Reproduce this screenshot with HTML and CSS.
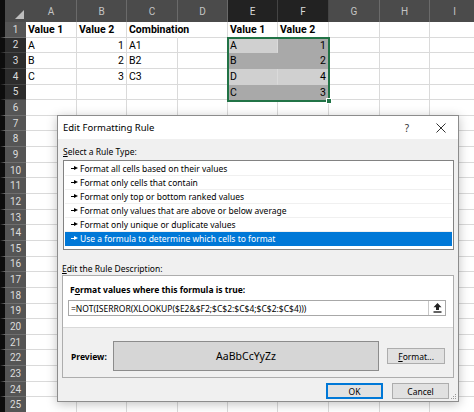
FILE: index.html
```html
<!DOCTYPE html>
<html lang="en">

<head>
  <meta charset="UTF-8">
  <title>Edit Formatting Rule</title>
  <link rel="stylesheet" href="styles.css">
</head>

<body>
  <div class="workbook">
    <div class="sheet" id="sheet"></div>
    <div class="selection"><span class="handle"></span></div>

    <div class="dialog">
      <div class="titlebar">
        <span class="title">Edit Formatting Rule</span>
        <span class="help">?</span>
        <svg class="close" width="10" height="10" viewBox="0 0 10 10">
          <path d="M0.5 0.5L9.5 9.5M9.5 0.5L0.5 9.5" stroke="#333" stroke-width="1" fill="none" />
        </svg>
      </div>
      <div class="body">
        <div class="label"><u>S</u>elect a Rule Type:</div>
        <ul class="rules">
          <li><i class="arrow"></i>Format all cells based on their values</li>
          <li><i class="arrow"></i>Format only cells that contain</li>
          <li><i class="arrow"></i>Format only top or bottom ranked values</li>
          <li><i class="arrow"></i>Format only values that are above or below average</li>
          <li><i class="arrow"></i>Format only unique or duplicate values</li>
          <li class="active"><i class="arrow"></i>Use a formula to determine which cells to format</li>
        </ul>

        <div class="label label-desc"><u>E</u>dit the Rule Description:</div>
        <div class="group">
          <div class="group-top">
            <div class="label-bold">F<u>o</u>rmat values where this formula is true:</div>
            <div class="formula">
              <span class="formula-text">=NOT(ISERROR(XLOOKUP($E2&amp;$F2;$C$2:$C$4;$C$2:$C$4)))</span>
              <span class="collapse">
                <svg width="9" height="10" viewBox="0 0 9 10">
                  <path d="M4.5 0L8.5 4.2H6V7H3V4.2H0.5Z" fill="#222" />
                  <rect x="0.5" y="8.3" width="8" height="1.4" fill="#222" />
                </svg>
              </span>
            </div>
          </div>
          <div class="group-bottom">
            <span class="preview-label">Preview:</span>
            <div class="preview">AaBbCcYyZz</div>
            <button class="btn btn-format"><u>F</u>ormat...</button>
          </div>
        </div>

        <div class="footer">
          <button class="btn btn-ok">OK</button>
          <button class="btn">Cancel</button>
        </div>
      </div>
      <svg class="grip" width="7" height="7" viewBox="0 0 7 7">
        <rect x="5" y="1" width="1" height="1" fill="#999" />
        <rect x="3" y="3" width="1" height="1" fill="#999" />
        <rect x="5" y="3" width="1" height="1" fill="#999" />
        <rect x="1" y="5" width="1" height="1" fill="#999" />
        <rect x="3" y="5" width="1" height="1" fill="#999" />
        <rect x="5" y="5" width="1" height="1" fill="#999" />
      </svg>
    </div>
  </div>

  <script>
    // sheet contents, rows 1-5; empty rows are filled in below
    var cols = ["A", "B", "C", "D", "E", "F", "G", "H", "I"];
    var data = [
      [["Value 1", "b"], ["Value 2", "b"], ["Combination", "b spill"], "", ["Value 1", "b"], ["Value 2", "b"]],
      ["A", ["1", "num"], "A1", "", ["A", "lt"], ["1", "num dk"]],
      ["B", ["2", "num"], "B2", "", ["B", "dk"], ["2", "num dk"]],
      ["C", ["3", "num"], "C3", "", ["D", "lt"], ["4", "num lt"]],
      ["", "", "", "", ["C", "dk"], ["3", "num dk"]]
    ];

    var sheet = document.getElementById("sheet");
    var html = '<div class="corner"><i></i></div>';

    cols.forEach(function (c) {
      var sel = (c == "E" || c == "F") ? " sel" : "";
      html += '<div class="col-head' + sel + '">' + c + '</div>';
    });

    for (var r = 1; r <= 25; r++) {
      var sel = (r >= 2 && r <= 5) ? " sel" : "";
      html += '<div class="row-head' + sel + '">' + r + '</div>';
      var row = data[r - 1] || [];
      for (var i = 0; i < cols.length; i++) {
        var cell = row[i] || "";
        var text = cell, cls = "";
        if (typeof cell != "string") {
          text = cell[0];
          cls = " " + cell[1];
        }
        html += '<div class="cell' + cls + '">' + text + '</div>';
      }
    }
    sheet.innerHTML = html;
  </script>
</body>

</html>
```

FILE: styles.css
```css
html,
body {
  margin: 0;
  padding: 0;
  background: #fff;
}

.workbook {
  position: relative;
  width: 474px;
  height: 412px;
  overflow: hidden;
}

/* grid */

.sheet {
  display: grid;
  grid-template-columns: 26px 51px 50px 51px 50px 50px 51px 51px 50px 50px;
  grid-template-rows: 22px repeat(25, 15.65px);
  font-family: Roboto, "Liberation Sans", sans-serif;
  font-size: 10.5px;
  color: #000;
}

.corner {
  position: relative;
  background: #4b4b4b;
  border-left: 5px solid #0d0d0d;
}

.corner i {
  position: absolute;
  right: 2px;
  bottom: 3px;
  width: 0;
  height: 0;
  border-left: 9px solid transparent;
  border-bottom: 9px solid #bdbdbd;
}

.col-head {
  background: #4b4b4b;
  border-right: 1px solid #6a6a6a;
  color: #c4c4c4;
  font-size: 10px;
  display: flex;
  align-items: center;
  justify-content: center;
}

.col-head.sel {
  background: #222;
  border-right-color: #444;
  color: #d8d8d8;
}

.row-head {
  background: #555;
  border-left: 5px solid #0d0d0d;
  border-bottom: 1px solid #6e6e6e;
  box-sizing: border-box;
  color: #dcdcdc;
  font-size: 10px;
  display: flex;
  align-items: center;
  justify-content: center;
}

.row-head.sel {
  background: #2c2c2c;
  border-bottom-color: #444;
}

.cell {
  box-sizing: border-box;
  border-right: 1px solid #dadada;
  border-bottom: 1px solid #dadada;
  padding: 0 2px;
  line-height: 15px;
  white-space: nowrap;
}

.cell.b {
  font-weight: bold;
}

.cell.num {
  text-align: right;
}

.cell.spill {
  border-right-color: transparent;
}

.cell.lt {
  background: #d0d0d0;
  border-bottom-color: #d0d0d0;
}

.cell.dk {
  background: #a9a9a9;
  border-color: #a9a9a9;
}

.selection {
  position: absolute;
  left: 227px;
  top: 37px;
  width: 99px;
  height: 61px;
  border: 2px solid #217346;
}

.selection .handle {
  position: absolute;
  right: -4px;
  bottom: -4px;
  width: 4px;
  height: 4px;
  background: #217346;
  border: 1px solid #fff;
}

/* dialog */

.dialog {
  position: absolute;
  left: 57px;
  top: 115px;
  width: 400px;
  height: 285px;
  border: 1px solid #8c8c8c;
  background: #f0f0f0;
  box-shadow: 0 2px 10px rgba(0, 0, 0, 0.25);
  font-family: "Noto Sans", "Liberation Sans", sans-serif;
  font-size: 8.5px;
  color: #000;
}

.titlebar {
  height: 23px;
  background: #fff;
  display: flex;
  align-items: center;
  padding-left: 5px;
}

.title {
  flex: 1;
  font-size: 9.5px;
}

.help {
  font-size: 10px;
  color: #333;
  margin-right: 27px;
}

.close {
  margin-right: 12px;
}

.body {
  padding: 0 4px 0 5px;
}

.label {
  line-height: 12px;
  margin-top: 7px;
  margin-bottom: 2px;
}

.label-desc {
  margin-top: 13px;
  margin-bottom: 0;
  margin-left: -1px;
}

.rules {
  list-style: none;
  margin: 0;
  padding: 1px;
  height: 86px;
  background: #fff;
  border: 1px solid #828282;
}

.rules li {
  height: 14px;
  line-height: 14px;
  box-sizing: border-box;
  border-bottom: 1px solid #f0f0f0;
  padding-left: 6px;
  display: flex;
  align-items: center;
  white-space: nowrap;
}

.rules li.active {
  background: #0078d7;
  color: #fff;
  border-bottom-color: #0078d7;
}

.arrow {
  position: relative;
  width: 7px;
  height: 5px;
  margin-right: 2px;
}

.arrow::before {
  content: "";
  position: absolute;
  left: 0;
  top: 2px;
  width: 3px;
  height: 1px;
  background: currentColor;
}

.arrow::after {
  content: "";
  position: absolute;
  left: 3px;
  top: 0;
  border-top: 2.5px solid transparent;
  border-bottom: 2.5px solid transparent;
  border-left: 4px solid currentColor;
}

.group {
  border: 1px solid #adadad;
  margin-left: -1px;
}

.group-top {
  background: #fff;
  height: 52px;
  box-sizing: border-box;
  border-bottom: 1px solid #d9d9d9;
  padding: 8px 7px 0 5px;
}

.label-bold {
  font-weight: bold;
  line-height: 12px;
  padding-left: 2px;
}

.formula {
  margin-top: 4px;
  height: 16px;
  box-sizing: border-box;
  border: 1px solid #a8a8a8;
  display: flex;
  align-items: center;
  background: #fff;
}

.formula-text {
  flex: 1;
  padding-left: 2px;
  white-space: nowrap;
}

.collapse {
  width: 16px;
  height: 14px;
  border-left: 1px solid #c8c8c8;
  display: flex;
  align-items: center;
  justify-content: center;
}

.group-bottom {
  height: 49px;
  box-sizing: border-box;
  display: flex;
  align-items: center;
  padding: 7px 8px 0 8px;
}

.preview-label {
  width: 42px;
  font-weight: bold;
}

.preview {
  width: 267px;
  height: 30px;
  box-sizing: border-box;
  border: 1px solid #8c8c8c;
  background: #d6d6d6;
  display: flex;
  align-items: center;
  justify-content: center;
  font-size: 10.5px;
}

.btn {
  font-family: "Noto Sans", "Liberation Sans", sans-serif;
  font-size: 8.5px;
  color: #000;
  background: #e1e1e1;
  border: 1px solid #adadad;
  height: 16px;
  width: 57px;
  padding: 0;
  margin: 0;
  box-sizing: border-box;
}

.btn-format {
  width: 58px;
  margin-left: 8px;
}

.footer {
  display: flex;
  justify-content: flex-end;
  gap: 9px;
  margin-top: 5px;
  padding-right: 5px;
}

.btn-ok {
  border: 2px solid #0078d7;
}

.grip {
  position: absolute;
  right: 1px;
  bottom: 1px;
}
```
